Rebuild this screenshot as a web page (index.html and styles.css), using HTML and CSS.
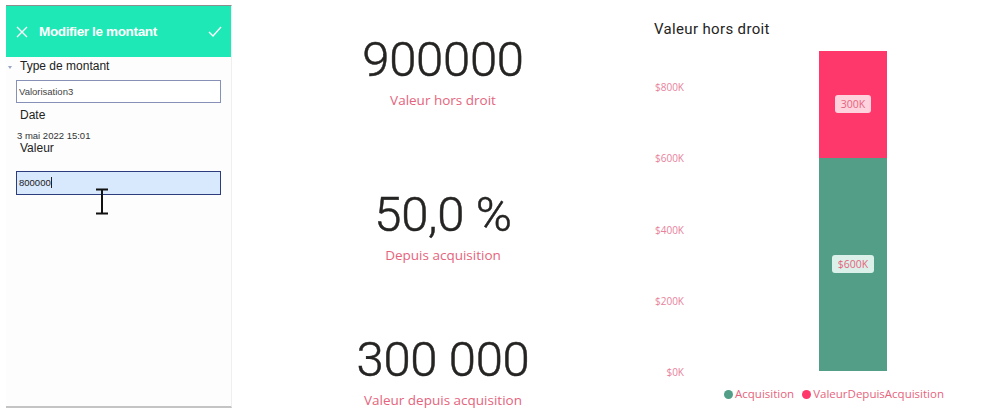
FILE: index.html
```html
<!DOCTYPE html>
<html lang="fr">
<head>
<meta charset="utf-8">
<title>Modifier le montant</title>
<link rel="stylesheet" href="styles.css">
</head>
<body>
<div class="page">
  <aside class="panel">
    <header class="panel-head">
      <svg class="icon-x" width="12" height="12" viewBox="0 0 12 12"><path d="M1 1L11 11M11 1L1 11" stroke="#fff" stroke-width="1.3" fill="none"/></svg>
      <span class="panel-title">Modifier le montant</span>
      <svg class="icon-check" width="14" height="11" viewBox="0 0 14 11"><path d="M1 6L5 10L13 1" stroke="#fff" stroke-width="1.4" fill="none"/></svg>
    </header>
    <div class="panel-body">
      <div class="field-label first"><span class="req"></span>Type de montant</div>
      <div class="input">Valorisation3</div>
      <div class="field-label date-label">Date</div>
      <div class="date-value">3 mai 2022 15:01</div>
      <div class="field-label valeur-label">Valeur</div>
      <div class="input active">800000<span class="caret"></span></div>
    </div>
    <svg class="ibeam" width="14" height="27" viewBox="0 0 14 27"><path d="M1 1.5H13M7 1.5V25.5M1 25.5H13" stroke="#111" stroke-width="2" fill="none"/></svg>
  </aside>

  <main class="kpis">
    <section class="kpi k1">
      <div class="kpi-value">900000</div>
      <div class="kpi-label">Valeur hors droit</div>
    </section>
    <section class="kpi k2">
      <div class="kpi-value">50,0 %</div>
      <div class="kpi-label">Depuis acquisition</div>
    </section>
    <section class="kpi k3">
      <div class="kpi-value">300 000</div>
      <div class="kpi-label">Valeur depuis acquisition</div>
    </section>
  </main>

  <section class="chart">
    <h2 class="chart-title">Valeur hors droit</h2>
    <div class="plot">
      <div class="axis">
        <span>$800K</span>
        <span>$600K</span>
        <span>$400K</span>
        <span>$200K</span>
        <span>$0K</span>
      </div>
      <div class="bar">
        <div class="seg seg-red" style="flex-grow:300"><span class="tag tag-red">300K</span></div>
        <div class="seg seg-green" style="flex-grow:600"><span class="tag tag-green">$600K</span></div>
      </div>
    </div>
    <div class="legend">
      <span class="lg"><i class="dot green"></i>Acquisition</span>
      <span class="lg"><i class="dot red"></i>ValeurDepuisAcquisition</span>
    </div>
  </section>
</div>
</body>
</html>
```

FILE: styles.css
```css
* { box-sizing: border-box; }
html, body { margin: 0; padding: 0; background: #fff; }
body { width: 984px; height: 414px; overflow: hidden; font-family: "Liberation Sans", Arial, sans-serif; }

.page { display: flex; align-items: flex-start; height: 414px; overflow: hidden; }

/* ---------- left edit panel ---------- */
.panel {
  position: relative;
  width: 226px;
  height: 403px;
  margin: 5px 0 0 6px;
  background: #fdfdfd;
  border-top: 1px solid #8d8d8d;
  border-bottom: 2px solid #c4c4c4;
  border-right: 1px solid #efefef;
  flex: none;
}
.panel-head {
  height: 51px;
  background: #1ee8b5;
  display: flex;
  align-items: center;
  padding: 0 9px 0 10px;
  color: #fff;
}
.icon-x { margin-right: 11px; flex: none; }
.panel-title { font-weight: bold; font-size: 13.5px; letter-spacing: -0.35px; flex: 1; }
.icon-check { flex: none; }

.panel-body { padding: 0 10px 0 10px; }
.field-label { font-size: 12px; line-height: 14px; color: #222; padding-left: 4px; position: relative; }
.field-label.first { margin-top: 2px; }
.req { position: absolute; left: -8px; top: 7px; width: 4px; height: 3px; background: #9aa4c4; clip-path: polygon(0 0, 100% 0, 50% 100%); }
.input {
  height: 23px;
  margin-top: 7px;
  border: 1px solid #8791b8;
  background: #fff;
  font-size: 9.5px;
  line-height: 21px;
  padding-left: 2px;
  color: #444;
  width: 205px;
}
.date-label { margin-top: 5px; }
.date-value { font-size: 9.5px; line-height: 10px; color: #333; margin-top: 9px; padding-left: 1px; }
.valeur-label { margin-top: 1px; line-height: 13px; }
.input.active {
  height: 24px;
  margin-top: 16px;
  background: #d8e8fd;
  border: 1.5px solid #2d3c7c;
  color: #222;
  line-height: 21px;
}
.caret { display: inline-block; width: 1px; height: 11px; background: #222; vertical-align: -2px; }
.ibeam { position: absolute; left: 89px; top: 182px; }

/* ---------- KPI cards ---------- */
.kpis {
  width: 422px;
  flex: none;
  display: flex;
  flex-direction: column;
  padding-top: 35px;
}
.kpi { display: flex; flex-direction: column; align-items: center; height: 150px; }
.k2 { padding-top: 5px; }
.k3 { height: auto; }
.kpi-value {
  font-family: Roboto, "Liberation Sans", sans-serif;
  font-weight: 300;
  font-size: 49px;
  line-height: 50px;
  color: #252423;
  letter-spacing: -0.3px;
  -webkit-text-stroke: 0.5px #252423;
}
.kpi-label {
  font-family: "Open Sans", "Noto Sans", sans-serif;
  font-size: 13.5px;
  line-height: 18px;
  color: #e5647d;
  margin-top: 6px;
}

/* ---------- chart ---------- */
.chart { width: 330px; flex: none; }
.chart-title {
  margin: 20px 0 0 0;
  font-family: Roboto, "Liberation Sans", sans-serif;
  font-weight: 400;
  font-size: 15px;
  letter-spacing: 0.35px;
  line-height: 18px;
  color: #252423;
}
.plot { display: flex; align-items: flex-start; margin-top: 13px; height: 320px; }
.axis {
  width: 30px;
  height: 299px;
  margin-top: 29px;
  display: flex;
  flex-direction: column;
  justify-content: space-between;
  align-items: flex-end;
  font-family: "Open Sans", sans-serif;
  font-size: 10px;
  line-height: 14px;
  color: #e8829a;
}
.bar { width: 68px; height: 320px; margin-left: 135px; display: flex; flex-direction: column; }
.seg { flex-basis: 0; display: flex; align-items: center; justify-content: center; }
.seg-red { background: #ff386b; }
.seg-green { background: #529e87; }
.tag {
  font-family: "Open Sans", sans-serif;
  font-size: 10.5px;
  line-height: 18px;
  height: 18px;
  padding: 0 6px;
  border-radius: 3px;
  color: #e5647d;
}
.tag-red { background: #ffd3dd; }
.tag-green { background: #dcf0ea; }

.legend {
  margin: 15px 0 0 30px;
  display: flex;
  justify-content: center;
  gap: 8px;
  font-family: "Open Sans", sans-serif;
  font-size: 11.5px;
  line-height: 16px;
  color: #e5647d;
}
.lg { display: flex; align-items: center; }
.dot { display: inline-block; width: 9px; height: 9px; border-radius: 50%; margin-right: 2px; }
.dot.green { background: #529e87; }
.dot.red { background: #ff386b; }
```
